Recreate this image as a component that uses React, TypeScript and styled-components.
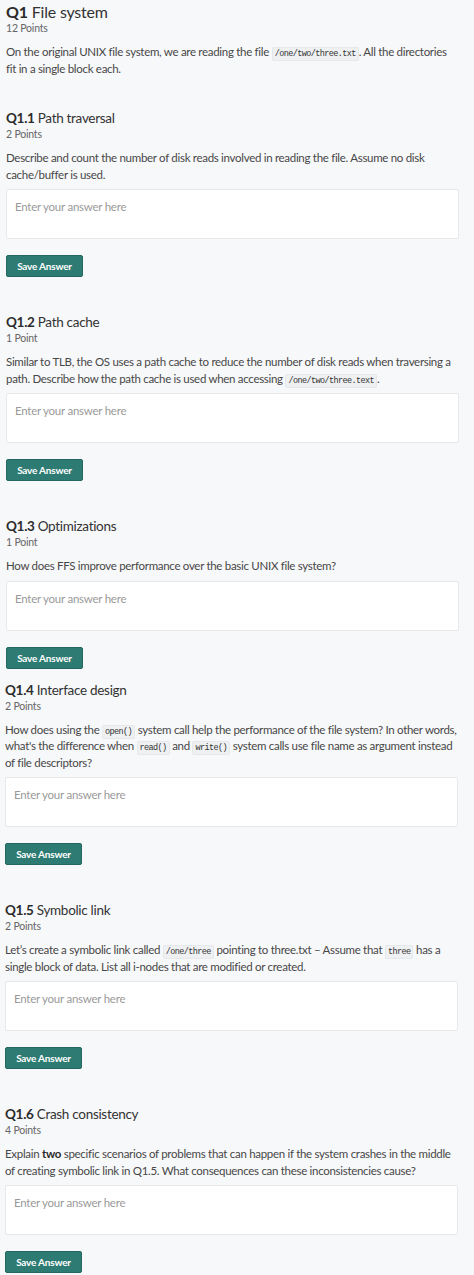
import React from "react";
import styled, { createGlobalStyle } from "styled-components";

const SANS = `Lato, "Liberation Sans", sans-serif`;

const GlobalStyle = createGlobalStyle`
  html, body {
    margin: 0;
    padding: 0;
    background: #f7f8fa;
  }
  body {
    font-family: ${SANS};
    color: #4a4a4a;
  }
`;

const Page = styled.main`
  display: flex;
  flex-direction: column;
  padding: 3px 15px 2px 6px;
  width: 453px;
`;

const Question = styled.section<{ $gap: number; $shift?: number }>`
  display: flex;
  flex-direction: column;
  margin-top: ${(p) => p.$gap}px;
  margin-left: ${(p) => p.$shift ?? 0}px;
`;

const Title = styled.h2<{ $main?: boolean }>`
  margin: 0;
  font-size: ${(p) => (p.$main ? 16 : 13.5)}px;
  letter-spacing: ${(p) => (p.$main ? -0.2 : -0.3)}px;
  line-height: ${(p) => (p.$main ? 18 : 17)}px;
  font-weight: 400;
  color: #333;
`;

const Num = styled.strong`
  font-weight: 700;
  color: #2b2b2b;
`;

const Points = styled.div`
  font-size: 10.5px;
  letter-spacing: -0.2px;
  line-height: 15px;
  color: #666;
`;

const Prompt = styled.p`
  margin: 8px 0 0;
  font-size: 11.5px;
  letter-spacing: -0.3px;
  line-height: 16.5px;
  color: #474747;
`;

const Code = styled.code`
  font-family: "Liberation Mono", "Courier New", monospace;
  font-size: 8.5px;
  line-height: 1;
  letter-spacing: -0.6px;
  background: #eef0f2;
  border: 1px solid #e6e8eb;
  border-radius: 2px;
  padding: 1px 2px 1px 2px;
  color: #333;
`;

const Answer = styled.textarea`
  box-sizing: border-box;
  margin-top: 6px;
  width: 453px;
  height: 50px;
  padding: 9px 8px;
  resize: none;
  border: 1px solid #e6e8eb;
  border-radius: 2px;
  background: #fff;
  font-family: ${SANS};
  font-size: 11.5px;
  letter-spacing: -0.25px;
  line-height: 16px;
  color: #333;
  &::placeholder {
    color: #9a9a9a;
  }
`;

const SaveButton = styled.button`
  box-sizing: border-box;
  align-self: flex-start;
  margin-top: 16px;
  width: 77px;
  height: 22px;
  padding: 0;
  border: 1px solid #24685f;
  border-radius: 2px;
  background: #2d7b72;
  color: #fff;
  font-family: ${SANS};
  font-size: 10px;
  letter-spacing: -0.2px;
  font-weight: 700;
`;

type Item = {
  num: string;
  name: string;
  points: string;
  gap: number;
  shift?: number;
  prompt: React.ReactNode;
};

const items: Item[] = [
  {
    num: "Q1.1",
    name: "Path traversal",
    points: "2 Points",
    gap: 33,
    prompt: (
      <>
        Describe and count the number of disk reads involved in reading the
        file. Assume no disk cache/buffer is used.
      </>
    ),
  },
  {
    num: "Q1.2",
    name: "Path cache",
    points: "1 Point",
    gap: 37,
    prompt: (
      <>
        Similar to TLB, the OS uses a path cache to reduce the number of disk
        reads when traversing a path. Describe how the path cache is used when
        accessing <Code>/one/two/three.text</Code>.
      </>
    ),
  },
  {
    num: "Q1.3",
    name: "Optimizations",
    points: "1 Point",
    gap: 37,
    prompt: <>How does FFS improve performance over the basic UNIX file system?</>,
  },
  {
    num: "Q1.4",
    name: "Interface design",
    points: "2 Points",
    gap: 13,
    shift: -1,
    prompt: (
      <>
        How does using the <Code>open()</Code> system call help the performance
        of the file system? In other words, what's the difference when{" "}
        <Code>read()</Code> and <Code>write()</Code> system calls use file name
        as argument instead of file descriptors?
      </>
    ),
  },
  {
    num: "Q1.5",
    name: "Symbolic link",
    points: "2 Points",
    gap: 37,
    shift: -1,
    prompt: (
      <>
        Let’s create a symbolic link called <Code>/one/three</Code> pointing to
        three.txt – Assume that <Code>three</Code> has a single block of data.
        List all i-nodes that are modified or created.
      </>
    ),
  },
  {
    num: "Q1.6",
    name: "Crash consistency",
    points: "4 Points",
    gap: 37,
    shift: -1,
    prompt: (
      <>
        Explain <Num>two</Num> specific scenarios of problems that can happen if
        the system crashes in the middle of creating symbolic link in Q1.5. What
        consequences can these inconsistencies cause?
      </>
    ),
  },
];

export default function App() {
  return (
    <>
      <GlobalStyle />
      <Page>
        <Question $gap={0}>
          <Title $main>
            <Num>Q1</Num> File system
          </Title>
          <Points>12 Points</Points>
          <Prompt>
            On the original UNIX file system, we are reading the file{" "}
            <Code>/one/two/three.txt</Code>. All the directories fit in a single
            block each.
          </Prompt>
        </Question>
        {items.map((q) => (
          <Question key={q.num} $gap={q.gap} $shift={q.shift}>
            <Title>
              <Num>{q.num}</Num> {q.name}
            </Title>
            <Points>{q.points}</Points>
            <Prompt>{q.prompt}</Prompt>
            <Answer placeholder="Enter your answer here" />
            <SaveButton type="button">Save Answer</SaveButton>
          </Question>
        ))}
      </Page>
    </>
  );
}
